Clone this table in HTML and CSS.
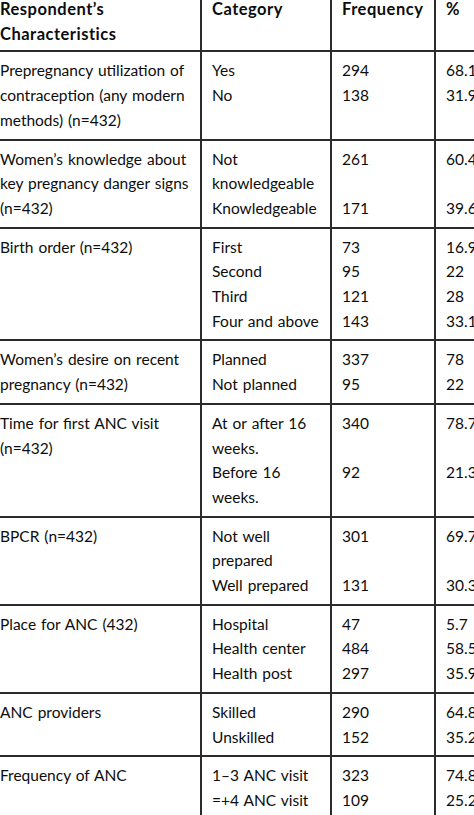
FILE: index.html
```html
<!DOCTYPE html>
<html>
<head>
<meta charset="utf-8">
<link rel="stylesheet" href="styles.css">
</head>
<body>
<div class="frame">
<table class="tbl">
<colgroup>
<col class="c1"><col class="c2"><col class="c3"><col class="c4">
</colgroup>
<thead>
<tr><th>Respondent’s<br>Characteristics</th><th>Category</th><th>Frequency</th><th>%</th></tr>
</thead>
<tbody>
<tr><td>Prepregnancy utilization of<br>contraception (any modern<br>methods) (n=432)</td><td>Yes<br>No</td><td>294<br>138</td><td>68.1<br>31.9</td></tr>
<tr><td>Women’s knowledge about<br>key pregnancy danger signs<br>(n=432)</td><td>Not<br>knowledgeable<br>Knowledgeable</td><td>261<br><br>171</td><td>60.4<br><br>39.6</td></tr>
<tr><td>Birth order (n=432)</td><td>First<br>Second<br>Third<br>Four and above</td><td>73<br>95<br>121<br>143</td><td>16.9<br>22<br>28<br>33.1</td></tr>
<tr><td>Women’s desire on recent<br>pregnancy (n=432)</td><td>Planned<br>Not planned</td><td>337<br>95</td><td>78<br>22</td></tr>
<tr><td>Time for first ANC visit<br>(n=432)</td><td>At or after 16<br>weeks.<br>Before 16<br>weeks.</td><td>340<br><br>92</td><td>78.7<br><br>21.3</td></tr>
<tr><td>BPCR (n=432)</td><td>Not well<br>prepared<br>Well prepared</td><td>301<br><br>131</td><td>69.7<br><br>30.3</td></tr>
<tr><td>Place for ANC (432)</td><td>Hospital<br>Health center<br>Health post</td><td>47<br>484<br>297</td><td>5.7<br>58.5<br>35.9</td></tr>
<tr><td>ANC providers</td><td>Skilled<br>Unskilled</td><td>290<br>152</td><td>64.8<br>35.2</td></tr>
<tr><td>Frequency of ANC</td><td>1–3 ANC visit<br>=+4 ANC visit</td><td>323<br>109</td><td>74.8<br>25.2</td></tr>
</tbody>
</table>
</div>
</body>
</html>
```
FILE: styles.css
```css
html, body {
  margin: 0;
  padding: 0;
  background: #fff;
}
.frame {
  width: 474px;
  height: 815px;
  overflow: hidden;
}
.tbl {
  border-collapse: collapse;
  table-layout: fixed;
  width: 532px;
  margin-left: -11px;
  margin-top: -13px;
  font-family: Lato, "Liberation Sans", sans-serif;
  font-size: 15.5px;
  line-height: 24.7px;
  word-spacing: 1px;
  color: #0d0d0d;
}
.c1 { width: 212px; }
.c2 { width: 130px; }
.c3 { width: 104px; }
.c4 { width: 86px; }
.tbl th, .tbl td {
  border: 2px solid #2b2b2b;
  padding: 6px 6px 6px 10px;
  text-align: left;
  vertical-align: top;
  white-space: nowrap;
}
.tbl th {
  font-weight: bold;
  font-size: 16.5px;
  letter-spacing: 0.5px;
  padding-top: 8px;
  padding-bottom: 4px;
}
.tbl tr > :first-child {
  border-left: none;
  padding-left: 11px;
}
```
